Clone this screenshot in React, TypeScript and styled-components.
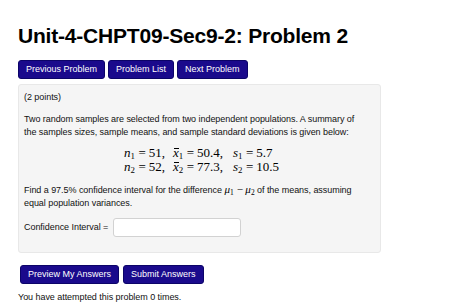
import React from "react";
import styled, { createGlobalStyle } from "styled-components";

const GlobalStyle = createGlobalStyle`
  body {
    margin: 0;
    background: #fff;
    font-family: "Liberation Sans", Arial, sans-serif;
    color: #111;
  }
`;

function Sym({ v, i }: { v: React.ReactNode; i: string }) {
  return (
    <>
      <V>{v}</V>
      <Sub>{i}</Sub>
    </>
  );
}

export default function App() {
  return (
    <Page>
      <GlobalStyle />
      <Title>Unit-4-CHPT09-Sec9-2: Problem 2</Title>
      <NavBar>
        <NavButton>Previous Problem</NavButton>
        <NavButton>Problem List</NavButton>
        <NavButton>Next Problem</NavButton>
      </NavBar>
      <Well>
        <Points>(2 points)</Points>
        <Intro>
          Two random samples are selected from two independent populations. A summary of
          the samples sizes, sample means, and sample standard deviations is given below:
        </Intro>
        <MathBlock>
          <MathRow>
            <span>
              <Sym v="n" i="1" />
              <Eq>=</Eq>51,
            </span>
            <span>
              <Sym v={<XBar>x</XBar>} i="1" />
              <Eq>=</Eq>50.4,
            </span>
            <span>
              <Sym v="s" i="1" />
              <Eq>=</Eq>5.7
            </span>
          </MathRow>
          <MathRow>
            <span>
              <Sym v="n" i="2" />
              <Eq>=</Eq>52,
            </span>
            <span>
              <Sym v={<XBar>x</XBar>} i="2" />
              <Eq>=</Eq>77.3,
            </span>
            <span>
              <Sym v="s" i="2" />
              <Eq>=</Eq>10.5
            </span>
          </MathRow>
        </MathBlock>
        <Question>
          Find a 97.5% confidence interval for the difference{" "}
          <InlineMath>
            <Sym v="μ" i="1" />
            <Eq>−</Eq>
            <Sym v="μ" i="2" />
          </InlineMath>{" "}
          of the means, assuming equal population variances.
        </Question>
        <AnswerRow>
          <label>Confidence Interval =</label>
          <AnswerInput type="text" />
        </AnswerRow>
      </Well>
      <SubmitBar>
        <NavButton>Preview My Answers</NavButton>
        <NavButton>Submit Answers</NavButton>
      </SubmitBar>
      <Attempts>You have attempted this problem 0 times.</Attempts>
    </Page>
  );
}

const Page = styled.div`
  padding-left: 18px;
  width: 363px;
`;

const Title = styled.h1`
  margin: 0;
  padding-top: 23px;
  font-size: 21px;
  line-height: 26px;
  font-weight: bold;
  letter-spacing: -0.2px;
  color: #000;
  white-space: nowrap;
`;

const NavBar = styled.div`
  display: flex;
  gap: 3px;
  margin-top: 11px;
`;

const NavButton = styled.button`
  height: 19px;
  padding: 0 7px;
  border: 1px solid #0c0468;
  border-radius: 3px;
  background: #1a0a8c;
  color: #fff;
  font-family: "Liberation Sans", Arial, sans-serif;
  font-size: 9px;
  line-height: 17px;
  white-space: nowrap;
`;

const Well = styled.div`
  margin-top: 5px;
  padding: 6px 14px 15px 5px;
  background: #f5f5f5;
  border: 1px solid #e8e8e8;
  border-radius: 3px;
  font-size: 9px;
  line-height: 13px;
  letter-spacing: -0.05px;
  color: #111;
`;

const Points = styled.p`
  margin: 0;
`;

const Intro = styled.p`
  margin: 9px 0 0;
`;

const Question = styled.p`
  margin: 10px 0 0;
`;

const MathBlock = styled.div`
  display: flex;
  flex-direction: column;
  align-items: center;
  margin-top: 7px;
  padding-left: 13px;
  font-family: "Liberation Serif", "Times New Roman", serif;
  font-size: 13px;
  line-height: 14px;
  letter-spacing: 0;
  color: #000;
`;

const MathRow = styled.div`
  display: grid;
  grid-template-columns: 49px 60px 46px;
  white-space: nowrap;
`;

const V = styled.i`
  font-family: "Liberation Serif", "Times New Roman", serif;
`;

const XBar = styled.span`
  position: relative;
  &::before {
    content: "";
    position: absolute;
    left: 1px;
    right: 0;
    top: 0.24em;
    border-top: 1px solid currentColor;
  }
`;

const Sub = styled.sub`
  font-size: 0.68em;
  vertical-align: -0.25em;
  line-height: 0;
  font-style: normal;
`;

const Eq = styled.span`
  margin: 0 0.22em 0 0.28em;
`;

const InlineMath = styled.span`
  font-family: "Liberation Serif", "Times New Roman", serif;
  font-size: 11px;
  line-height: 0;
  letter-spacing: 0;
  white-space: nowrap;
  color: #000;
`;

const AnswerRow = styled.div`
  display: flex;
  align-items: center;
  gap: 5px;
  margin-top: 8px;
`;

const AnswerInput = styled.input`
  width: 128px;
  height: 19px;
  box-sizing: border-box;
  border: 1px solid #d2d2d2;
  border-radius: 3px;
  background: #fff;
  padding: 0 4px;
`;

const SubmitBar = styled.div`
  display: flex;
  gap: 4px;
  margin: 12px 0 0 2px;
`;

const Attempts = styled.div`
  margin-top: 7px;
  font-size: 9px;
  line-height: 13px;
  letter-spacing: -0.05px;
  color: #111;
  white-space: nowrap;
`;
